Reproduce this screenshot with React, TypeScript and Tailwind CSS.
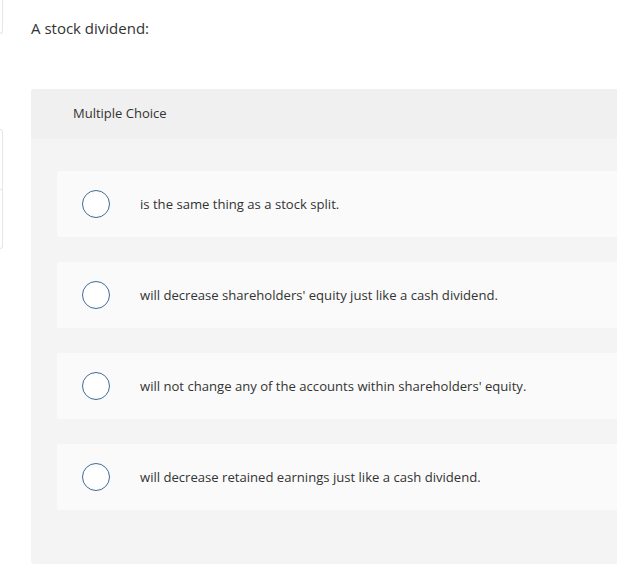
import React from "react";

const options = [
  "is the same thing as a stock split.",
  "will decrease shareholders' equity just like a cash dividend.",
  "will not change any of the accounts within shareholders' equity.",
  "will decrease retained earnings just like a cash dividend.",
];

export default function App() {
  return (
    <div className="flex min-h-[579px] w-[617px] overflow-hidden bg-white text-[#333333]" style={{ fontFamily: "'Open Sans', sans-serif" }}>
      <div className="flex w-[3px] shrink-0 flex-col">
        <div className="h-[34px] rounded-br-[3px] border-r border-b border-[#e6e6e6]" />
        <div className="mt-[95px] flex h-[120px] flex-col rounded-r-[3px] border-y border-r border-[#e6e6e6]">
          <div className="h-[60px] border-b border-[#e6e6e6]" />
        </div>
      </div>
      <div className="flex min-w-0 flex-1 flex-col pl-[28px]">
        <div className="pt-[16px] text-[15px] leading-[24px]">A stock dividend:</div>
        <div className="mt-[49px] mb-[15px] flex flex-col rounded-l-[3px] bg-[#f4f4f4] pb-[54px]">
          <div className="flex h-[50px] items-center rounded-tl-[3px] bg-[#f0f0f0] pl-[42px] text-[13px]">Multiple Choice</div>
          <div className="flex flex-col gap-[25px] pt-[32px] pl-[26px]">
            {options.map((o) => (
              <div key={o} className="flex h-[66px] items-center rounded-l-[2px] bg-[#fafafa]">
                <div className="ml-[25px] h-[28px] w-[28px] shrink-0 rounded-full border-[1.5px] border-[#3d6b9a] bg-white" />
                <div className="ml-[30px] mt-[2px] text-[13.1px]">{o}</div>
              </div>
            ))}
          </div>
        </div>
      </div>
    </div>
  );
}
